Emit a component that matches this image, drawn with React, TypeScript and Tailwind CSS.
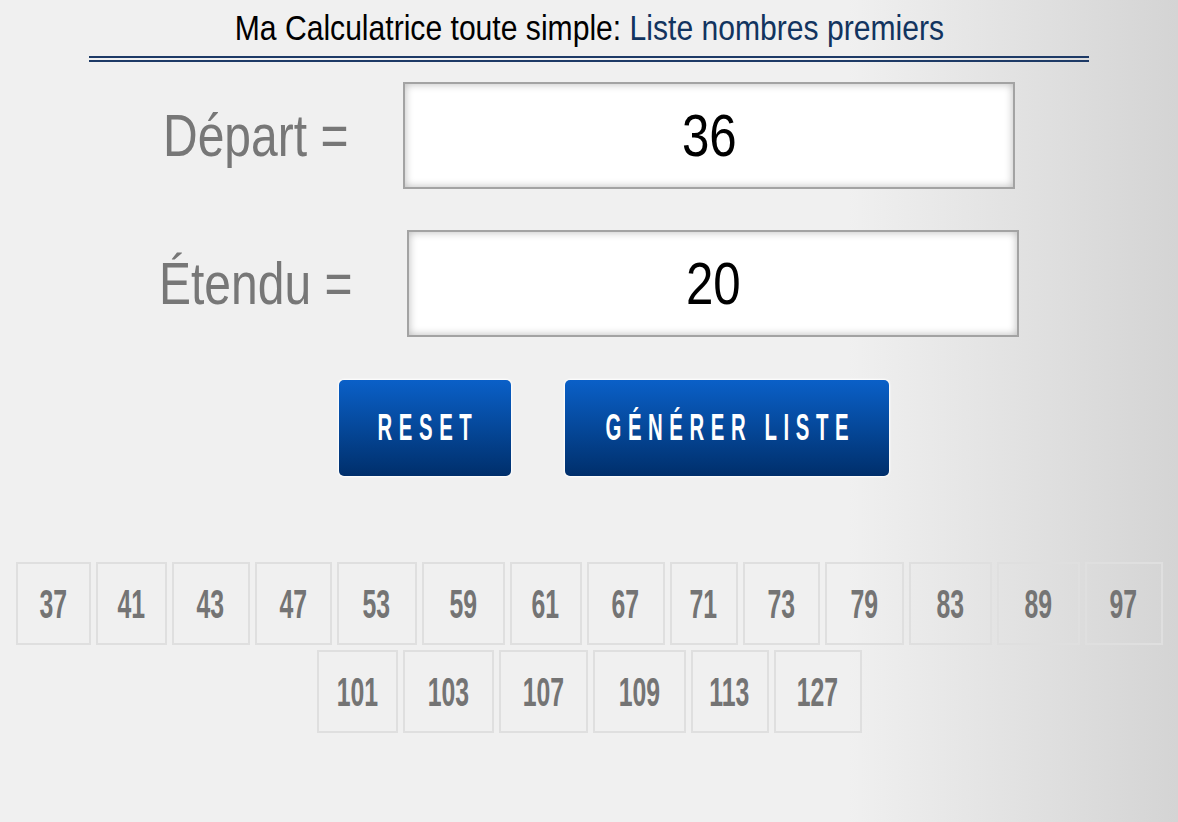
import React from 'react'

const font = '"Liberation Sans", Arial, sans-serif'

// widths of the result tiles, as measured on the original page
const row1: [number, number][] = [
  [37, 75], [41, 71], [43, 78], [47, 77], [53, 80], [59, 83], [61, 72],
  [67, 78], [71, 68], [73, 77], [79, 79], [83, 83], [89, 83], [97, 78],
]
const row2: [number, number][] = [
  [101, 81], [103, 91], [107, 89], [109, 93], [113, 78], [127, 88],
]

function Field({ label, value, labelWidth }: { label: string; value: string; labelWidth: string }) {
  return (
    <div className="flex items-center justify-center gap-[55px]">
      <div className={`${labelWidth} whitespace-nowrap text-[60px] leading-none text-[#777777]`}>
        <span className="inline-block origin-left scale-x-[0.8]">{label}</span>
      </div>
      <div className="flex h-[107px] w-[612px] items-center justify-center border-2 border-[#a3a3a3] bg-white shadow-[inset_0_0_8px_rgba(0,0,0,0.28)]">
        <span className="inline-block scale-x-[0.82] text-[60px] leading-none text-black">{value}</span>
      </div>
    </div>
  )
}

function Tile({ n, w }: { n: number; w: number }) {
  return (
    <div
      className="flex h-[83px] items-center justify-center border-2 border-[#dfdfdf] text-[40px] font-bold leading-none text-[#747474]"
      style={{ width: w }}
    >
      <span className="inline-block scale-x-[0.62]">{n}</span>
    </div>
  )
}

function BlueButton({ label, width }: { label: string; width: string }) {
  return (
    <button
      type="button"
      className={`${width} flex h-[96px] items-center justify-center rounded-[5px] bg-[linear-gradient(to_bottom,#0a60c8,#002f6b)] text-[37px] font-bold text-white shadow-[0_0_2px_1px_#ffffff]`}
    >
      <span className="inline-block shrink-0 scale-x-[0.55] whitespace-nowrap pl-[12px] tracking-[12px]">{label}</span>
    </button>
  )
}

export default function App() {
  return (
    <div
      className="h-[822px] w-full overflow-hidden bg-[linear-gradient(to_right,#f0f0f0_0%,#f0f0f0_72%,#d4d4d4_100%)]"
      style={{ fontFamily: font }}
    >
      {/* header */}
      <div className="whitespace-nowrap pt-[8px] text-center text-[35px] leading-[40px] text-black">
        <span className="inline-block scale-x-[0.86]">
          Ma Calculatrice toute simple: <span className="text-[#12345f]">Liste nombres premiers</span>
        </span>
      </div>
      <div className="mx-auto mt-[8px] h-[6px] w-[1000px] border-y-2 border-[#1d3a66]" />

      <div className="mt-[20px]">
        <Field label="Départ =" value="36" labelWidth="w-[185px]" />
      </div>
      <div className="mt-[41px]">
        <Field label="Étendu =" value="20" labelWidth="w-[193px]" />
      </div>

      {/* buttons */}
      <div className="mt-[43px] flex justify-center gap-[54px] pl-[50px]">
        <BlueButton label="RESET" width="w-[172px]" />
        <BlueButton label="GÉNÉRER LISTE" width="w-[324px]" />
      </div>

      {/* results */}
      <div className="mt-[86px] flex flex-col items-center gap-[5px]">
        <div className="flex justify-center gap-[5px]">
          {row1.map(([n, w]) => (
            <Tile key={n} n={n} w={w} />
          ))}
        </div>
        <div className="flex justify-center gap-[5px]">
          {row2.map(([n, w]) => (
            <Tile key={n} n={n} w={w} />
          ))}
        </div>
      </div>
    </div>
  )
}
